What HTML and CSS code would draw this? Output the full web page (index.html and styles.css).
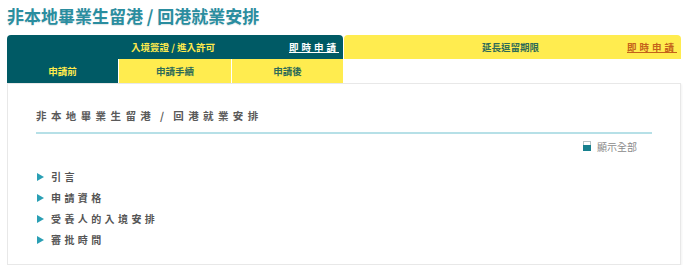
FILE: index.html
```html
<!DOCTYPE html>
<html lang="zh-Hant">
<head>
<meta charset="utf-8">
<link rel="stylesheet" href="styles.css">
</head>
<body>
<div class="page">
  <h1 class="title">非本地畢業生留港 / 回港就業安排</h1>
  <div class="tabs">
    <div class="tab-col">
      <div class="tab tab-dark">
        <span></span>
        <span class="tab-label">入境簽證 / 進入許可</span>
        <a class="tab-link link-light">即時申請</a>
      </div>
      <div class="subtabs">
        <div class="subtab subtab-active">申請前</div>
        <div class="subtab">申請手續</div>
        <div class="subtab">申請後</div>
      </div>
    </div>
    <div class="tab-col">
      <div class="tab tab-yellow">
        <span></span>
        <span class="tab-label">延長逗留期限</span>
        <a class="tab-link link-dark">即時申請</a>
      </div>
    </div>
  </div>
  <div class="box">
    <h2 class="box-heading">非本地畢業生留港 / 回港就業安排</h2>
    <div class="show-all">
      <svg class="show-icon" width="8" height="10" viewBox="0 0 8 10">
        <rect x="0.5" y="0.5" width="7" height="9" fill="#ffffff" stroke="#b8c4c6"/>
        <rect x="0" y="4" width="8" height="6" fill="#17808e"/>
      </svg>
      <span>顯示全部</span>
    </div>
    <ul class="items">
      <li class="item"><span class="tri"></span>引言</li>
      <li class="item"><span class="tri"></span>申請資格</li>
      <li class="item"><span class="tri"></span>受養人的入境安排</li>
      <li class="item"><span class="tri"></span>審批時間</li>
    </ul>
  </div>
</div>
</body>
</html>
```
FILE: styles.css
```css
* { box-sizing: border-box; }
html, body { margin: 0; padding: 0; background: #ffffff; }
body {
  font-family: "Noto Sans CJK TC", "Noto Sans", sans-serif;
  color: #555555;
}
.page {
  width: 674px;
  margin-left: 7px;
}
.title {
  margin: 0;
  height: 35px;
  padding-top: 4px;
  font-size: 17px;
  line-height: 23px;
  font-weight: 700;
  color: #2a8d9f;
  text-shadow: 0 1px 1px rgba(0, 60, 70, 0.12);
}
.tabs {
  display: grid;
  grid-template-columns: 336px 337px;
  column-gap: 1px;
}
.tab {
  height: 24px;
  display: grid;
  grid-template-columns: 1fr auto 1fr;
  align-items: center;
  border-radius: 4px 4px 0 0;
  font-size: 9.5px;
  font-weight: 700;
  padding: 0 4px 0 0;
}
.tab-dark { background: #005a65; color: #ffea4c; }
.tab-yellow { background: #ffec4f; color: #2e6b58; }
.tab-label { text-align: center; }
.tab-link {
  justify-self: end;
  text-decoration: underline;
  letter-spacing: 3px;
  font-weight: 700;
  font-size: 9.5px;
}
.link-light { color: #ffffff; }
.link-dark { color: #c4621a; }
.subtabs {
  display: grid;
  grid-template-columns: 111px 112px 111px;
  column-gap: 1px;
}
.subtab {
  height: 24px;
  display: flex;
  align-items: center;
  justify-content: center;
  background: #ffec4f;
  color: #2e6b58;
  font-size: 9.5px;
  font-weight: 700;
}
.subtab-active { background: #005a65; color: #ffea4c; }
.box {
  height: 182px;
  border: 1px solid #e8e8e8;
  box-shadow: 1px 1px 2px rgba(0, 0, 0, 0.05);
  padding: 0 28px 0 28px;
}
.box-heading {
  margin: 0;
  padding-top: 24px;
  height: 50px;
  border-bottom: 2px solid #b6e0e7;
  font-size: 10.5px;
  line-height: 16px;
  letter-spacing: 4.4px;
  word-spacing: -2px;
  font-weight: 700;
  color: #5a5a5a;
}
.show-all {
  display: flex;
  justify-content: flex-end;
  align-items: center;
  gap: 6px;
  height: 24px;
  padding-right: 15px;
  font-size: 10px;
  color: #8a8a8a;
}
.show-icon { display: block; }
.items {
  list-style: none;
  margin: 0;
  padding: 8px 0 0 1px;
}
.item {
  display: flex;
  align-items: center;
  height: 21px;
  font-size: 10px;
  letter-spacing: 3.4px;
  font-weight: 700;
  color: #555555;
}
.tri {
  width: 0;
  height: 0;
  border-top: 4px solid transparent;
  border-bottom: 4px solid transparent;
  border-left: 7px solid #2a9fb4;
  margin-right: 7px;
}
```
